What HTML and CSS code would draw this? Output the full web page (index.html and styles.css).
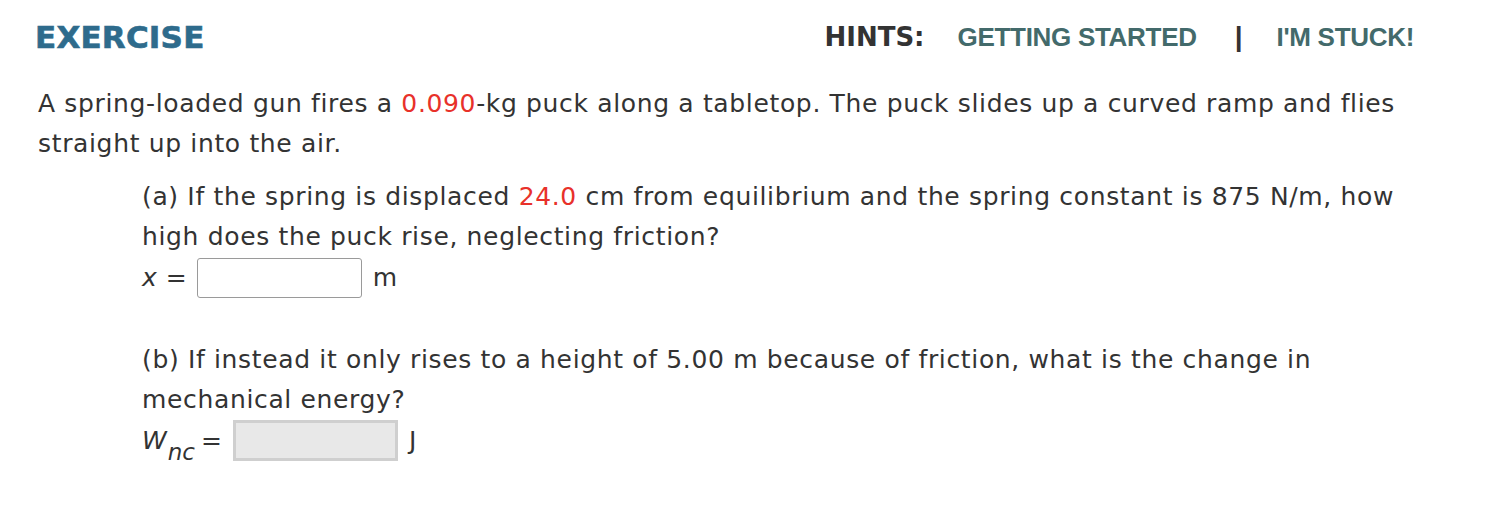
FILE: index.html
```html
<!DOCTYPE html>
<html>
<head>
<meta charset="utf-8">
<link rel="stylesheet" href="styles.css">
</head>
<body>
<div class="page">
  <header class="top">
    <h1 class="title">EXERCISE</h1>
    <nav class="hints">
      <span class="hints-label">HINTS:</span>
      <a class="hint-link">GETTING STARTED</a>
      <span class="sep">|</span>
      <a class="hint-link">I'M STUCK!</a>
    </nav>
  </header>
  <p class="intro">A spring-loaded gun fires a <span class="red">0.090</span>-kg puck along a tabletop. The puck slides up a curved ramp and flies straight up into the air.</p>
  <div class="part part-a">
    <p class="q">(a) If the spring is displaced <span class="red">24.0</span> cm from equilibrium and the spring constant is 875 N/m, how high does the puck rise, neglecting friction?</p>
    <div class="answer">
      <span class="var"><i>x</i></span><span class="eq">=</span><span class="box box-white"></span><span class="unit">m</span>
    </div>
  </div>
  <div class="part part-b">
    <p class="q">(b) If instead it only rises to a height of 5.00 m because of friction, what is the change in mechanical energy?</p>
    <div class="answer">
      <span class="var"><i>W</i><sub><i>nc</i></sub></span><span class="eq">=</span><span class="box box-gray"></span><span class="unit">J</span>
    </div>
  </div>
</div>
</body>
</html>
```
FILE: styles.css
```css
html, body {
  margin: 0;
  padding: 0;
  background: #fff;
}
.page {
  padding: 18px 96px 0 38px;
  font-family: "DejaVu Sans", Verdana, sans-serif;
  color: #333;
  font-size: 25px;
  letter-spacing: 0.65px;
}
.top {
  display: flex;
  justify-content: space-between;
  align-items: center;
  height: 38px;
  letter-spacing: 0;
}
.title {
  margin: 0 0 0 -3px;
  font-family: "DejaVu Sans", Verdana, sans-serif;
  font-weight: bold;
  font-size: 31px;
  letter-spacing: 0.2px;
  color: #2e6b8c;
  -webkit-text-stroke: 0.6px #2e6b8c;
}
.hints {
  display: flex;
  align-items: center;
  font-weight: bold;
}
.hints-label {
  font-family: "DejaVu Sans", Verdana, sans-serif;
  font-size: 26px;
  color: #333;
  margin-right: 33px;
}
.hint-link {
  font-family: "Liberation Sans", Arial, sans-serif;
  font-size: 26px;
  color: #436a6b;
  letter-spacing: -0.3px;
}
.sep {
  font-family: "Liberation Sans", Arial, sans-serif;
  font-size: 28px;
  color: #333;
  margin: 0 34px 0 38px;
}
.intro {
  margin: 28px 0 0 0;
  line-height: 40px;
}
.part {
  margin-left: 104px;
}
.part-a {
  margin-top: 13px;
}
.part-b {
  margin-top: 42px;
}
.q {
  margin: 0;
  line-height: 40px;
}
.answer {
  display: flex;
  align-items: center;
  height: 41px;
  letter-spacing: 0;
}
.var {
  display: inline-flex;
  align-items: baseline;
}
.var sub {
  font-size: 23px;
  position: relative;
  top: 11px;
  vertical-align: baseline;
  margin-left: 1px;
}
.eq {
  margin: 0 10px 0 9px;
}
.part-b .eq {
  margin: 0 11px 0 6px;
}
.box {
  display: inline-block;
  box-sizing: border-box;
}
.box-white {
  width: 165px;
  height: 40px;
  border: 1px solid #9a9a9a;
  border-radius: 3px;
  background: #fff;
}
.box-gray {
  width: 165px;
  height: 41px;
  border: 3px solid #cfcfcf;
  background: #e8e8e8;
}
.unit {
  margin-left: 11px;
}
.red {
  color: #e8312a;
}
```
